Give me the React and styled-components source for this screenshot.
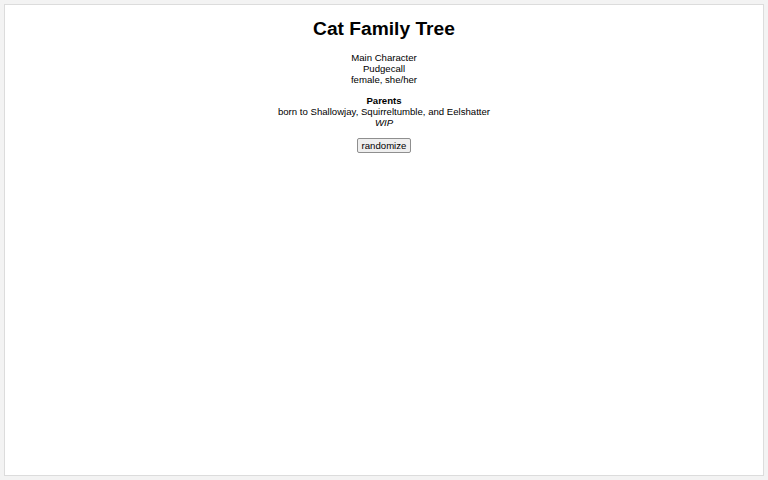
import React from 'react';
import styled, { createGlobalStyle } from 'styled-components';

const GlobalStyle = createGlobalStyle`
  html, body {
    margin: 0;
    background: #f3f3f3;
  }
  body {
    padding: 4px;
    font-family: 'Liberation Sans', Arial, sans-serif;
    font-size: 9.6px;
    color: #000;
  }
`;

const Page = styled.main`
  box-sizing: border-box;
  height: 472px;
  background: #fff;
  border: 1px solid #dcdcdc;
  text-align: center;
  padding-top: 1px;
`;

const Title = styled.h1`
  font-size: 19.2px;
  font-weight: bold;
  margin: 12px 0 12px;
  line-height: 22px;
`;

const Block = styled.section`
  line-height: 11px;
  margin-bottom: 10px;
`;

const Line = styled.div`
  font-weight: ${(p) => (p.$bold ? 'bold' : 'normal')};
  font-style: ${(p) => (p.$italic ? 'italic' : 'normal')};
`;

const Button = styled.button`
  font-family: 'Liberation Sans', Arial, sans-serif;
  font-size: 9.6px;
  line-height: 11px;
  padding: 1px 4px;
  background: #efefef;
  border: 1px solid #8f8f8f;
  border-radius: 2px;
  color: #000;
`;

export default function App() {
  return (
    <>
      <GlobalStyle />
      <Page>
        <Title>Cat Family Tree</Title>
        <Block>
          <Line>Main Character</Line>
          <Line>Pudgecall</Line>
          <Line>female, she/her</Line>
        </Block>
        <Block>
          <Line $bold>Parents</Line>
          <Line>born to Shallowjay, Squirreltumble, and Eelshatter</Line>
          <Line $italic>WIP</Line>
        </Block>
        <Button>randomize</Button>
      </Page>
    </>
  );
}
